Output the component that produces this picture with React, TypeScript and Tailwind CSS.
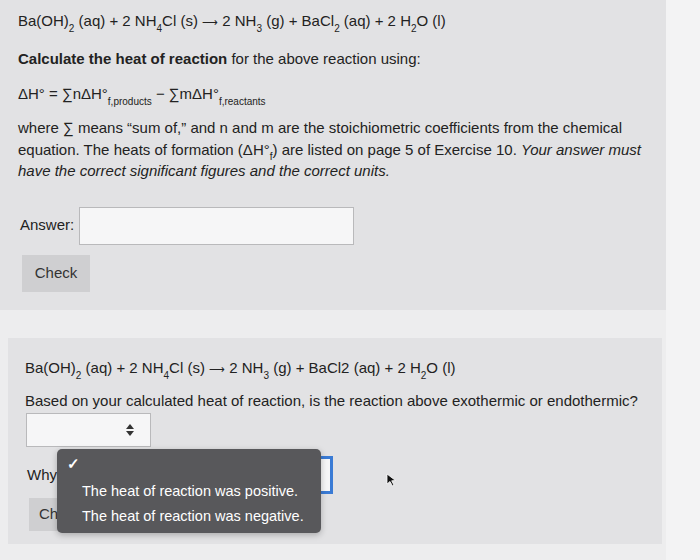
import React from 'react';

const font = { fontFamily: '"Liberation Sans", Arial, sans-serif' };

function Sub({ children }: { children: React.ReactNode }) {
  return <sub className="text-[10px] align-[-3px]">{children}</sub>;
}

function Reaction({ bacl2 }: { bacl2: React.ReactNode }) {
  return (
    <div className="h-[21px] leading-[21px] text-[15px] text-[#222]">
      Ba(OH)<Sub>2</Sub> (aq) + 2 NH<Sub>4</Sub>Cl (s) <span className="text-[11px]">⟶</span> 2 NH<Sub>3</Sub> (g) + {bacl2} (aq) + 2 H
      <Sub>2</Sub>O (l)
    </div>
  );
}

function Arrows() {
  return (
    <svg width="8" height="12" viewBox="0 0 8 12" className="fill-[#333]">
      <path d="M4 0 L8 5 L0 5 Z" />
      <path d="M0 7 L8 7 L4 12 Z" />
    </svg>
  );
}

export default function App() {
  return (
    <div className="relative w-[700px] h-[560px] overflow-hidden bg-[#ededee]" style={font}>
      <div className="absolute right-0 top-0 h-full w-[34px] bg-[#f3f3f4]" />

      <div className="relative w-[666px] h-[310px] bg-[#e2e2e4] px-[18px] pt-[10px]">
        <Reaction
          bacl2={
            <>
              BaCl<Sub>2</Sub>
            </>
          }
        />
        <div className="mt-[17px] h-[21px] leading-[21px] text-[15px] text-[#222]">
          <b>Calculate the heat of reaction</b> for the above reaction using:
        </div>
        <div className="mt-[14px] h-[21px] leading-[21px] text-[15px] text-[#222]">
          ΔH° = ∑nΔH°<Sub>f,products</Sub> − ∑mΔH°<Sub>f,reactants</Sub>
        </div>
        <p className="mt-[13px] text-[15px] leading-[21.5px] text-[#222]">
          where ∑ means “sum of,” and n and m are the stoichiometric coefficients from the chemical
          <br />
          equation. The heats of formation (ΔH°<Sub>f</Sub>) are listed on page 5 of Exercise 10.{' '}
          <i>Your answer must</i>
          <br />
          <i>have the correct significant figures and the correct units.</i>
        </p>
        <div className="mt-[25px] ml-[2px] flex items-center gap-[5px]">
          <span className="text-[15px] text-[#222]">Answer:</span>
          <div className="w-[275px] h-[38px] border border-[#b9b9bb] bg-[#f6f6f7]" />
        </div>
        <div className="mt-[10px] ml-[4px] w-[68px] h-[37px] flex items-center justify-center bg-[#cfcfd1] text-[15px] text-[#333]">
          Check
        </div>
      </div>

      <div className="relative ml-[8px] mt-[28px] w-[654px] h-[206px] bg-[#e2e2e4] px-[17px] pt-[19px]">
        <Reaction bacl2="BaCl2" />
        <div className="mt-[12px] h-[21px] leading-[21px] text-[15px] text-[#222]">
          Based on your calculated heat of reaction, is the reaction above exothermic or endothermic?
        </div>
        <div className="mt-[2px] ml-[1px] w-[125px] h-[34px] border border-[#b9b9bb] bg-[#f6f6f7] flex items-center justify-end pr-[16px]">
          <Arrows />
        </div>
        <div className="mt-[9px] ml-[2px] flex items-center gap-[4px]">
          <span className="text-[15px] text-[#222]">Why</span>
          <div className="w-[272px] h-[38px] border-[3px] border-[#3a7bd5] bg-[#f6f6f7]" />
        </div>
        <div className="mt-[4px] ml-[4px] w-[68px] h-[33px] flex items-center pl-[10px] bg-[#cfcfd1] text-[15px] text-[#333]">
          Check
        </div>

        <div className="absolute left-[49px] top-[111px] w-[264px] h-[84px] rounded-[5px] bg-[#58585b] shadow-[0_2px_6px_rgba(0,0,0,0.25)] text-white text-[14.5px]">
          <div className="pl-[10px] pt-[7px] h-[24px] leading-[16px] text-[15px] font-bold">✓</div>
          <div className="pl-[25px] mt-[7px] leading-[22px]">The heat of reaction was positive.</div>
          <div className="pl-[25px] mt-[3px] leading-[22px]">The heat of reaction was negative.</div>
        </div>

        <svg className="absolute left-[378px] top-[135px]" width="12" height="14" viewBox="0 0 12 14">
          <path d="M1 1 L1 11 L4 8.5 L6.5 13 L8 12.3 L5.7 7.8 L9.5 7.5 Z" fill="#111" stroke="#fff" strokeWidth="0.8" />
        </svg>
      </div>
    </div>
  );
}
